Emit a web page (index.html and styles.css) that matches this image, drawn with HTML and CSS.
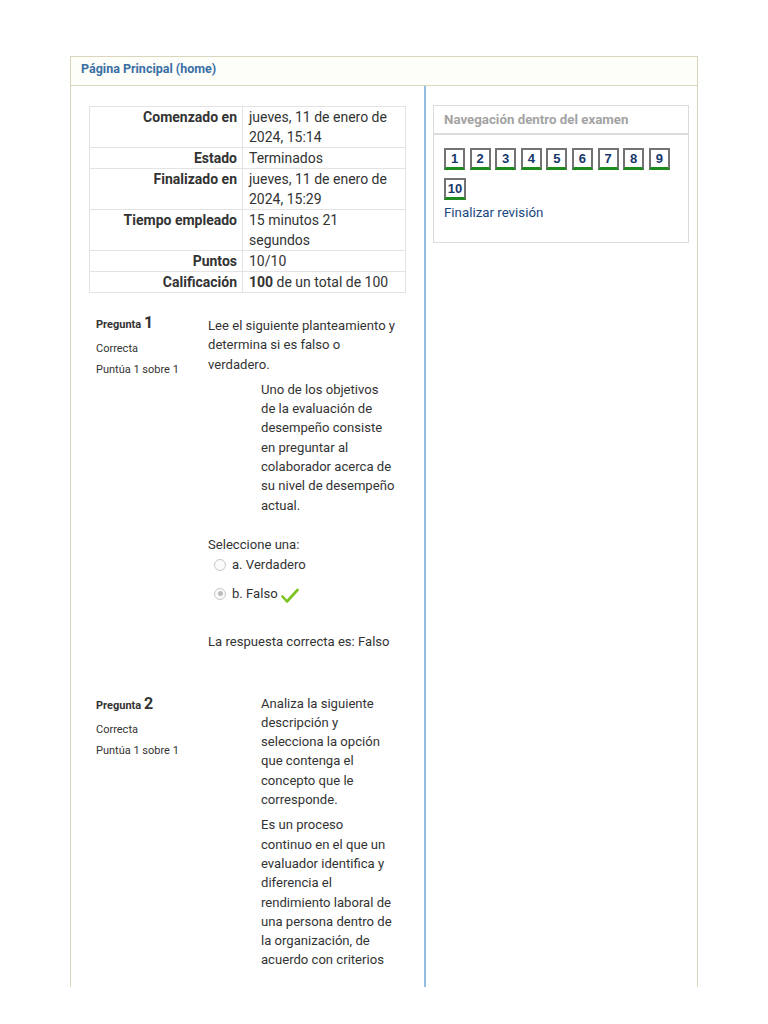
FILE: index.html
```html
<!DOCTYPE html>
<html lang="es">
<head>
<meta charset="utf-8">
<title>Revisión del examen</title>
<link rel="stylesheet" href="styles.css">
</head>
<body>
<div class="page">
  <div class="crumb"><a href="#">Página Principal (home)</a></div>
  <div class="main">
    <div class="content">
      <table class="summary">
        <tr><th>Comenzado en</th><td>jueves, 11 de enero de 2024, 15:14</td></tr>
        <tr><th>Estado</th><td>Terminados</td></tr>
        <tr><th>Finalizado en</th><td>jueves, 11 de enero de 2024, 15:29</td></tr>
        <tr><th>Tiempo empleado</th><td>15 minutos 21 segundos</td></tr>
        <tr><th>Puntos</th><td>10/10</td></tr>
        <tr><th>Calificación</th><td><b>100</b> de un total de 100</td></tr>
      </table>

      <div class="que q1">
        <div class="info">
          <div class="no">Pregunta <span class="qno">1</span></div>
          <div class="state">Correcta</div>
          <div class="grade">Puntúa 1 sobre 1</div>
        </div>
        <div class="formulation">
          <p class="lead">Lee el siguiente planteamiento y determina si es falso o verdadero.</p>
          <p class="indent wide">Uno de los objetivos<br>de la evaluación de<br>desempeño consiste<br>en preguntar al<br>colaborador acerca de<br>su nivel de desempeño<br>actual.</p>
          <div class="prompt">Seleccione una:</div>
          <div class="answer">
            <div class="opt"><span class="radio"></span><span>a. Verdadero</span></div>
            <div class="opt"><span class="radio checked"></span><span>b. Falso</span>
              <svg class="tick" width="18" height="16" viewBox="0 0 18 16"><path d="M1.5 8.5 L6 13.5 L16.5 2" fill="none" stroke="#7cc31e" stroke-width="2.6" stroke-linecap="round" stroke-linejoin="round"/></svg>
            </div>
          </div>
          <div class="rightanswer">La respuesta correcta es: Falso</div>
        </div>
      </div>

      <div class="que q2">
        <div class="info">
          <div class="no">Pregunta <span class="qno">2</span></div>
          <div class="state">Correcta</div>
          <div class="grade">Puntúa 1 sobre 1</div>
        </div>
        <div class="formulation">
          <p class="indent first">Analiza la siguiente descripción y selecciona la opción que contenga el concepto que le corresponde.</p>
          <p class="indent">Es un proceso continuo en el que un evaluador identifica y diferencia el rendimiento laboral de una persona dentro de la organización, de acuerdo con criterios</p>
        </div>
      </div>
    </div>

    <aside class="side">
      <div class="block">
        <div class="block-head">Navegación dentro del examen</div>
        <div class="block-body">
          <div class="navbtns">
            <a class="qbtn" href="#">1</a><a class="qbtn" href="#">2</a><a class="qbtn" href="#">3</a><a class="qbtn" href="#">4</a><a class="qbtn" href="#">5</a><a class="qbtn" href="#">6</a><a class="qbtn" href="#">7</a><a class="qbtn" href="#">8</a><a class="qbtn" href="#">9</a><a class="qbtn wide" href="#">10</a>
          </div>
          <a class="finish" href="#">Finalizar revisión</a>
        </div>
      </div>
    </aside>
  </div>
</div>
</body>
</html>
```

FILE: styles.css
```css
html, body {
  margin: 0;
  padding: 0;
  background: #ffffff;
}

body {
  font-family: Roboto, "Liberation Sans", Arial, sans-serif;
  font-size: 14px;
  color: #333333;
}

.page {
  margin: 56px 0 0 70px;
  width: 628px;
  height: 931px;
  box-sizing: border-box;
  border: 1px solid #d9d6bd;
  border-bottom: none;
  overflow: hidden;
  display: flex;
  flex-direction: column;
}

.crumb {
  height: 29px;
  box-sizing: border-box;
  padding: 5px 0 0 10px;
  background: #fdfdfa;
  border-bottom: 1px solid #d9d6bd;
  font-size: 12.5px;
  font-weight: bold;
  line-height: 14px;
}

.crumb a {
  color: #3a6fa6;
  text-decoration: none;
}

.main {
  flex: 1;
  display: flex;
}

.content {
  width: 353px;
  flex: none;
}

.summary {
  margin: 20px 0 0 18px;
  width: 317px;
  border-collapse: collapse;
  line-height: 20px;
}

.summary th,
.summary td {
  border: 1px solid #e3e3e3;
  padding: 0 5px 0 6px;
  vertical-align: top;
}

.summary th {
  width: 141px;
  text-align: right;
  font-weight: bold;
  color: #333333;
}

.summary td b {
  font-weight: bold;
}

.que {
  display: flex;
}

.q1 {
  margin-top: 20px;
}

.q2 {
  margin-top: 42px;
}

.info {
  width: 112px;
  flex: none;
  padding-left: 25px;
  font-size: 11px;
}

.info .no {
  font-weight: bold;
  line-height: 20px;
}

.info .qno {
  font-size: 16px;
}

.info .state,
.info .grade {
  line-height: 14px;
  margin-top: 7px;
}

.formulation {
  width: 196px;
  font-size: 13.1px;
  line-height: 19.3px;
}

.formulation p {
  margin: 0;
}

.lead {
  padding-top: 3px;
}

.indent {
  margin-left: 53px !important;
  width: 132px;
  margin-top: 6px !important;
}

.indent.wide {
  width: 143px;
}

.indent.first {
  margin-top: 0 !important;
}

.prompt {
  margin-top: 20px;
}

.answer {
  padding-left: 5px;
  margin-top: -4px;
}

.opt {
  display: flex;
  align-items: center;
  height: 29px;
}

.radio {
  width: 12px;
  height: 12px;
  box-sizing: border-box;
  border: 1px solid #c8c8c8;
  border-radius: 50%;
  background: #fafafa;
  margin: 0 6px 0 1px;
  position: relative;
}

.radio.checked::after {
  content: "";
  position: absolute;
  left: 2.5px;
  top: 2.5px;
  width: 5px;
  height: 5px;
  border-radius: 50%;
  background: #bdbdbd;
}

.tick {
  margin-left: 3px;
  margin-top: 4px;
}

.rightanswer {
  margin-top: 24px;
}

.side {
  flex: 1;
  border-left: 2px solid #93bde3;
  padding: 19px 9px 0 7px;
}

.block {
  border: 1px solid #dcdcdc;
}

.block-head {
  height: 29px;
  box-sizing: border-box;
  padding: 6px 10px 0;
  border-bottom: 2px solid #dcdcdc;
  font-size: 13.3px;
  font-weight: bold;
  color: #a3a3a3;
  line-height: 15px;
}

.block-body {
  padding: 13px 10px 19px;
}

.navbtns {
  display: flex;
  flex-wrap: wrap;
  column-gap: 4.6px;
  row-gap: 8px;
  width: 234px;
}

.qbtn {
  width: 21px;
  height: 22px;
  box-sizing: border-box;
  border: 2px solid #737373;
  border-bottom: 3px solid #1f8a1f;
  background: #ffffff;
  color: #17386b;
  font-family: "Liberation Sans", Arial, sans-serif;
  font-size: 13px;
  font-weight: bold;
  line-height: 17px;
  text-align: center;
  text-decoration: none;
}

.qbtn.wide {
  width: 22px;
}

.finish {
  display: block;
  margin-top: 3px;
  color: #19477f;
  font-size: 13.3px;
  text-decoration: none;
  line-height: 20px;
}
```
